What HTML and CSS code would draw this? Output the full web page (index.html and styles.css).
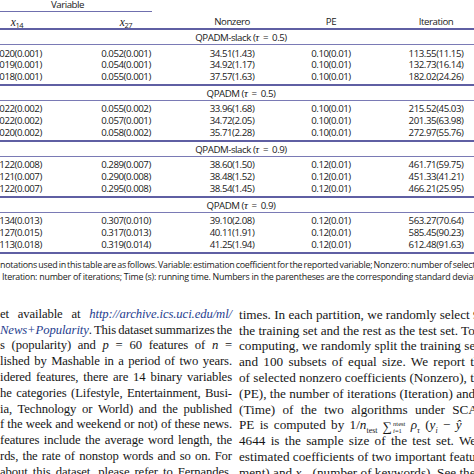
FILE: index.html
```html
<!DOCTYPE html>
<html>
<head>
<meta charset="utf-8">
<link rel="stylesheet" href="styles.css">
</head>
<body>
<div class="page">
  <div class="table">
    <div class="varhead">Variable</div>
    <div class="row head">
      <div><i class="mx">x</i><sub>14</sub></div>
      <div><i class="mx">x</i><sub>27</sub></div>
      <div>Nonzero</div>
      <div>PE</div>
      <div>Iteration</div>
      <div></div>
    </div>

    <div class="group">QPADM-slack (<i class="tau">τ</i> <span class="eq">=</span> 0.5)</div>
    <div class="data">
      <div class="row"><div>0.020(0.001)</div><div>0.052(0.001)</div><div>34.51(1.43)</div><div>0.10(0.01)</div><div>113.55(11.15)</div><div></div></div>
      <div class="row"><div>0.019(0.001)</div><div>0.054(0.001)</div><div>34.92(1.17)</div><div>0.10(0.01)</div><div>132.73(16.14)</div><div></div></div>
      <div class="row"><div>0.018(0.001)</div><div>0.055(0.001)</div><div>37.57(1.63)</div><div>0.10(0.01)</div><div>182.02(24.26)</div><div></div></div>
    </div>

    <div class="group">QPADM (<i class="tau">τ</i> <span class="eq">=</span> 0.5)</div>
    <div class="data">
      <div class="row"><div>0.022(0.002)</div><div>0.055(0.002)</div><div>33.96(1.68)</div><div>0.10(0.01)</div><div>215.52(45.03)</div><div></div></div>
      <div class="row"><div>0.022(0.002)</div><div>0.057(0.001)</div><div>34.72(2.05)</div><div>0.10(0.01)</div><div>201.35(63.98)</div><div></div></div>
      <div class="row"><div>0.020(0.002)</div><div>0.058(0.002)</div><div>35.71(2.28)</div><div>0.10(0.01)</div><div>272.97(55.76)</div><div></div></div>
    </div>

    <div class="group">QPADM-slack (<i class="tau">τ</i> <span class="eq">=</span> 0.9)</div>
    <div class="data">
      <div class="row"><div>0.122(0.008)</div><div>0.289(0.007)</div><div>38.60(1.50)</div><div>0.12(0.01)</div><div>461.71(59.75)</div><div></div></div>
      <div class="row"><div>0.121(0.007)</div><div>0.290(0.008)</div><div>38.48(1.52)</div><div>0.12(0.01)</div><div>451.33(41.21)</div><div></div></div>
      <div class="row"><div>0.122(0.007)</div><div>0.295(0.008)</div><div>38.54(1.45)</div><div>0.12(0.01)</div><div>466.21(25.95)</div><div></div></div>
    </div>

    <div class="group">QPADM (<i class="tau">τ</i> <span class="eq">=</span> 0.9)</div>
    <div class="data">
      <div class="row"><div>0.134(0.013)</div><div>0.307(0.010)</div><div>39.10(2.08)</div><div>0.12(0.01)</div><div>563.27(70.64)</div><div></div></div>
      <div class="row"><div>0.127(0.015)</div><div>0.317(0.013)</div><div>40.11(1.91)</div><div>0.12(0.01)</div><div>585.45(90.23)</div><div></div></div>
      <div class="row"><div>0.113(0.018)</div><div>0.319(0.014)</div><div>41.25(1.94)</div><div>0.12(0.01)</div><div>612.48(91.63)</div><div></div></div>
    </div>
  </div>

  <div class="note">
    <div class="nl tight">notations used in this table are as follows. Variable: estimation coefficient for the reported variable; Nonzero: number of selected</div>
    <div class="nl second">Iteration: number of iterations; Time (s): running time. Numbers in the parentheses are the corresponding standard deviations.</div>
  </div>

  <div class="text">
    <div class="col left">
      <div class="ln"><span class="lt">et available at <a class="link">http://archive.ics.uci.edu/ml/</a></span></div>
      <div class="ln"><span class="lt"><a class="link">News+Popularity</a>. This dataset summarizes the</span></div>
      <div class="ln"><span class="lt">s (popularity) and <i>p</i> = 60 features of <i>n</i> =</span></div>
      <div class="ln"><span class="lt">lished by Mashable in a period of two years.</span></div>
      <div class="ln"><span class="lt">idered features, there are 14 binary variables</span></div>
      <div class="ln"><span class="lt">he categories (Lifestyle, Entertainment, Busi-</span></div>
      <div class="ln"><span class="lt">ia, Technology or World) and the published</span></div>
      <div class="ln"><span class="lt">f the week and weekend or not) of these news.</span></div>
      <div class="ln"><span class="lt">features include the average word length, the</span></div>
      <div class="ln"><span class="lt">rds, the rate of nonstop words and so on. For</span></div>
      <div class="ln"><span class="lt">about this dataset, please refer to Fernandes,</span></div>
    </div>
    <div class="col right">
      <div class="rl">times. In each partition, we randomly select 90%</div>
      <div class="rl">the training set and the rest as the test set. To</div>
      <div class="rl">computing, we randomly split the training set</div>
      <div class="rl wide">and 100 subsets of equal size. We report the</div>
      <div class="rl">of selected nonzero coefficients (Nonzero), the</div>
      <div class="rl">(PE), the number of iterations (Iteration) and</div>
      <div class="rl wider">(Time) of the two algorithms under SCAD</div>
      <div class="rl wide">PE is computed by 1/<i>n</i><sub class="s">test</sub> <span class="sum"><span class="sig">∑</span><span class="lims"><span class="lim"><i>n</i>test</span><span class="lim"><i>i</i>=1</span></span></span> <i>ρ</i><sub class="s"><i>τ</i></sub> (<i>y</i><sub class="s"><i>i</i></sub> − <i>ŷ</i></div>
      <div class="rl wide">4644 is the sample size of the test set. We</div>
      <div class="rl">estimated coefficients of two important features</div>
      <div class="rl">ment) and <i>x</i><sub class="s">27</sub> (number of keywords). See the</div>
    </div>
  </div>
</div>
</body>
</html>
```

FILE: styles.css
```css
html, body {
  margin: 0;
  padding: 0;
  background: #ffffff;
}

.page {
  width: 474px;
  height: 474px;
  overflow: hidden;
}

.table {
  margin-left: -35px;
  width: 552px;
  font-family: "Open Sans", "Liberation Sans", sans-serif;
  font-size: 9.7px;
  letter-spacing: -0.45px;
  color: #1a1a1a;
}

.varhead {
  margin-left: 18px;
  width: 169px;
  height: 11px;
  line-height: 10px;
  text-align: center;
  border-bottom: 1px solid #6f6fae;
}

.row {
  display: grid;
  grid-template-columns: 104px 114px 98px 100px 110px 26px;
  text-align: center;
}

.head {
  padding-top: 4px;
  height: 12px;
  line-height: 12px;
  border-bottom: 2px solid #5f5fa3;
}

.head sub {
  font-size: 7.5px;
  vertical-align: -2px;
  line-height: 0;
}

.mx {
  font-family: "Liberation Serif", serif;
  font-size: 11.5px;
}

.group {
  height: 14px;
  line-height: 14px;
  text-align: center;
  border-bottom: 1px solid #7a7ab5;
}

.tau {
  font-family: "Liberation Serif", serif;
  font-size: 11px;
}

.eq {
  margin: 0 2px;
}

.data {
  padding: 2.5px 0 1.4px;
  border-bottom: 2px solid #5f5fa3;
}

.data .row {
  line-height: 11.7px;
  height: 11.7px;
}

.note {
  margin-top: 5px;
  font-family: "Open Sans", "Liberation Sans", sans-serif;
  font-size: 8.9px;
  line-height: 12px;
  color: #1a1a1a;
  white-space: nowrap;
  letter-spacing: -0.25px;
}

.tight {
  word-spacing: -0.8px;
}

.second {
  padding-left: 2px;
}

.text {
  margin-top: 24px;
  display: grid;
  grid-template-columns: 232px 300px;
  column-gap: 7px;
  font-family: "Liberation Serif", serif;
  font-size: 13.2px;
  line-height: 15.8px;
  color: #161616;
}

.left {
  font-size: 12.7px;
}

.ln {
  height: 15.8px;
  display: flex;
  justify-content: flex-end;
  white-space: nowrap;
}

.lt {
  display: block;
  min-width: 100%;
  flex: none;
  text-align: justify;
  text-align-last: justify;
  letter-spacing: -0.1px;
  word-spacing: -1px;
}

.rl {
  height: 15.8px;
  white-space: nowrap;
}

.wide {
  word-spacing: 2px;
}

.wider {
  word-spacing: 4px;
}

.link {
  color: #263d8e;
  font-style: italic;
}

.s {
  font-size: 8px;
  line-height: 0;
}

.sum {
  display: inline-flex;
  align-items: center;
  vertical-align: -2px;
  height: 14px;
  word-spacing: 0;
}

.sig {
  font-size: 13px;
  line-height: 14px;
}

.lims {
  display: inline-flex;
  flex-direction: column;
  font-size: 6.5px;
  line-height: 7px;
  margin-left: 1px;
}

.lim {
  display: block;
}
```
